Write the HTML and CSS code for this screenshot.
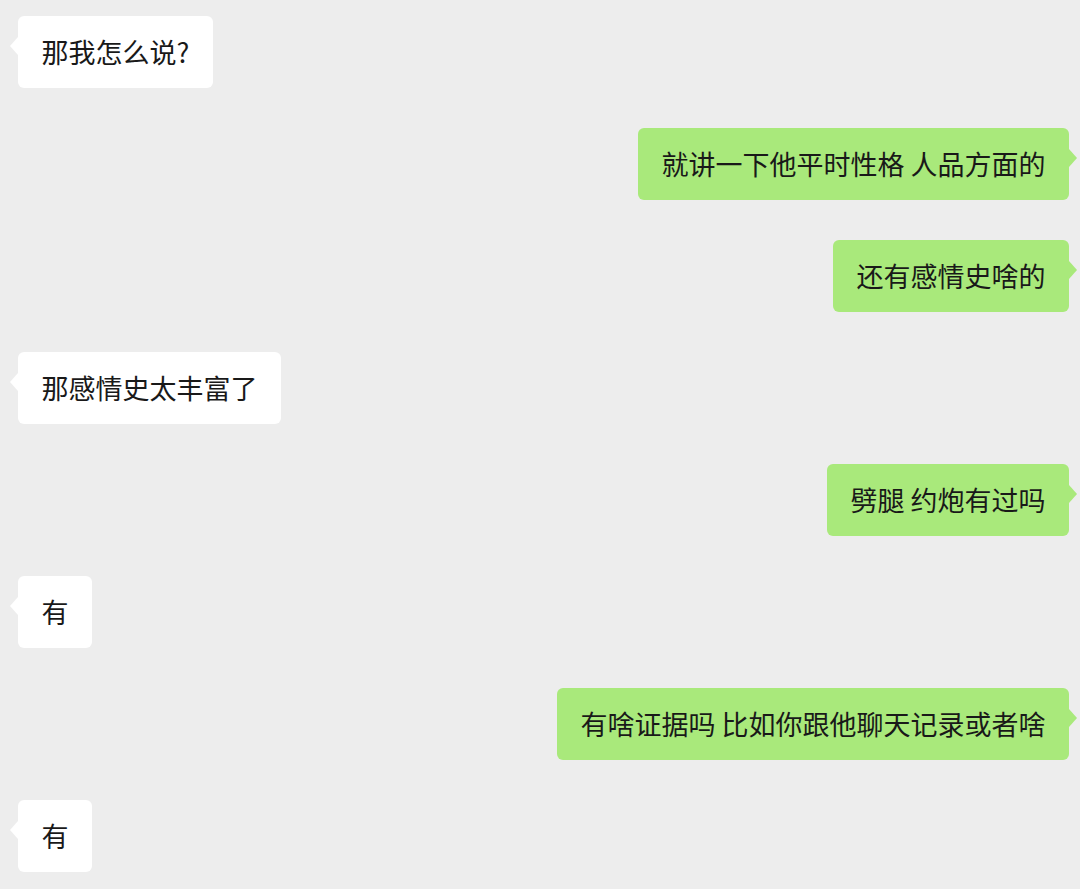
FILE: index.html
```html
<!DOCTYPE html>
<html lang="zh-CN">
<head>
<meta charset="utf-8">
<title>聊天</title>
<link rel="stylesheet" href="styles.css">
</head>
<body>
<main class="chat">
  <div class="row in"><div class="bubble">那我怎么说?</div></div>
  <div class="row out"><div class="bubble">就讲一下他平时性格 人品方面的</div></div>
  <div class="row out"><div class="bubble">还有感情史啥的</div></div>
  <div class="row in"><div class="bubble">那感情史太丰富了</div></div>
  <div class="row out"><div class="bubble">劈腿 约炮有过吗</div></div>
  <div class="row in"><div class="bubble">有</div></div>
  <div class="row out"><div class="bubble">有啥证据吗 比如你跟他聊天记录或者啥</div></div>
  <div class="row in"><div class="bubble">有</div></div>
</main>
</body>
</html>
```
FILE: styles.css
```css
html, body {
  margin: 0;
  height: 100%;
  background: #ededed;
}

.chat {
  display: flex;
  flex-direction: column;
  gap: 40px;
  padding: 16px 11px 0 18px;
  font-family: "Noto Sans CJK SC", "Noto Sans", sans-serif;
  font-size: 27px;
  color: #191919;
}

.row {
  display: flex;
}

.row.in { justify-content: flex-start; }
.row.out { justify-content: flex-end; }

.bubble {
  position: relative;
  height: 72px;
  line-height: 72px;
  padding: 0 23.5px;
  border-radius: 6px;
  white-space: nowrap;
  box-sizing: border-box;
}

.in .bubble { background: #ffffff; }
.out .bubble { background: #a9e97b; }

/* little pointer on the speaker's side */
.bubble::before {
  content: "";
  position: absolute;
  top: 21px;
  border-top: 9px solid transparent;
  border-bottom: 9px solid transparent;
}

.in .bubble::before {
  left: -8px;
  border-right: 8px solid #ffffff;
}

.out .bubble::before {
  right: -8px;
  border-left: 8px solid #a9e97b;
}
```
